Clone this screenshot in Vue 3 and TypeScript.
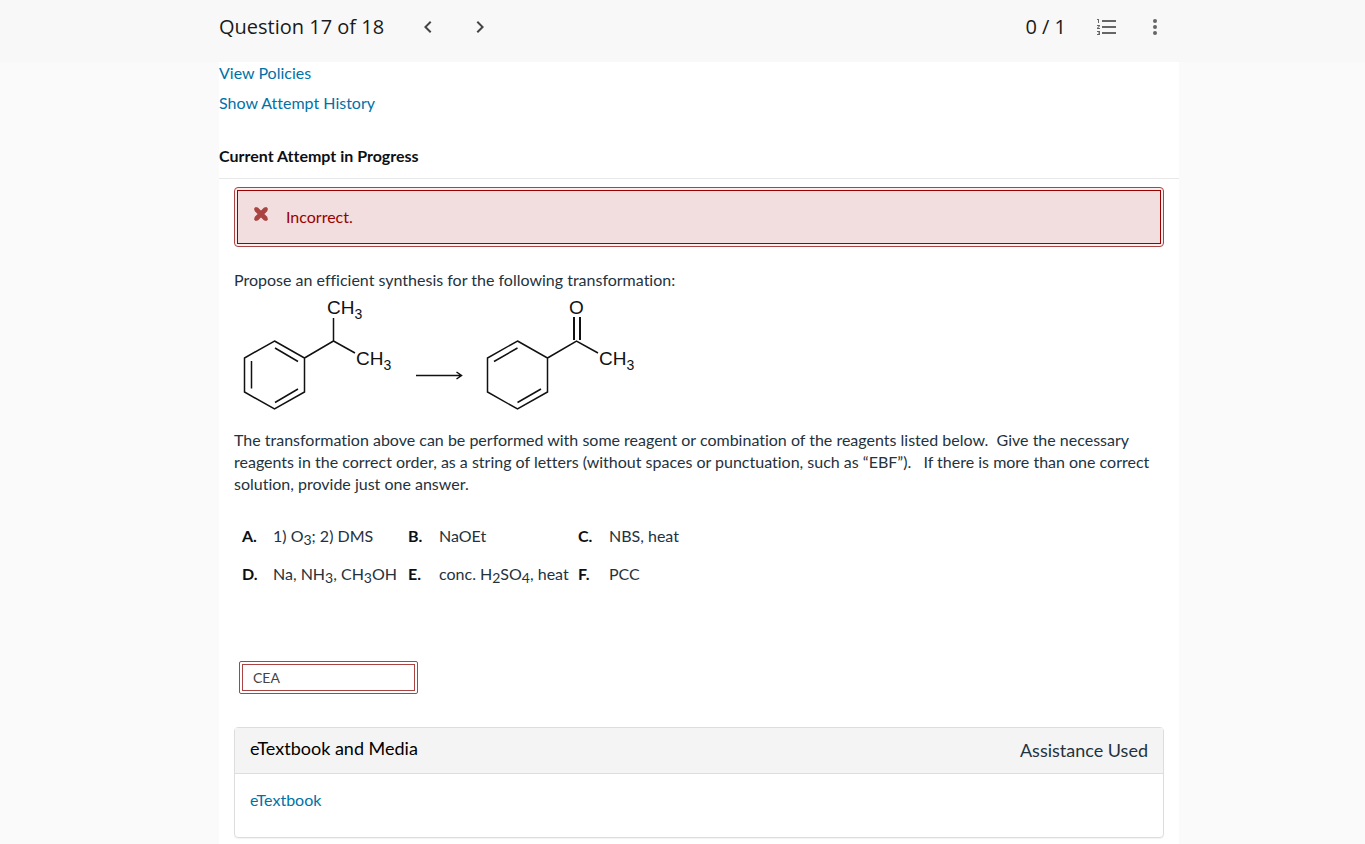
<script setup lang="ts">
import { ref } from 'vue'

interface Choice {
  letter: string
  parts: { text: string; sub?: boolean }[]
}

const answer = ref('CEA')

const rows: Choice[][] = [
  [
    { letter: 'A.', parts: [{ text: '1) O' }, { text: '3', sub: true }, { text: '; 2) DMS' }] },
    { letter: 'B.', parts: [{ text: 'NaOEt' }] },
    { letter: 'C.', parts: [{ text: 'NBS, heat' }] },
  ],
  [
    {
      letter: 'D.',
      parts: [
        { text: 'Na, NH' },
        { text: '3', sub: true },
        { text: ', CH' },
        { text: '3', sub: true },
        { text: 'OH' },
      ],
    },
    {
      letter: 'E.',
      parts: [
        { text: 'conc. H' },
        { text: '2', sub: true },
        { text: 'SO' },
        { text: '4', sub: true },
        { text: ', heat' },
      ],
    },
    { letter: 'F.', parts: [{ text: 'PCC' }] },
  ],
]
</script>

<template>
  <div class="page">
    <header class="topbar">
      <h1 class="title">Question 17 of 18</h1>
      <button class="icon-btn prev" type="button" aria-label="Previous question">
        <svg width="24" height="24" viewBox="0 0 24 24"><path d="M15.41 7.41 14 6l-6 6 6 6 1.41-1.41L10.83 12z" fill="#444" /></svg>
      </button>
      <button class="icon-btn next" type="button" aria-label="Next question">
        <svg width="24" height="24" viewBox="0 0 24 24"><path d="M10 6 8.59 7.41 13.17 12l-4.58 4.59L10 18l6-6z" fill="#444" /></svg>
      </button>
      <span class="score">0 / 1</span>
      <button class="icon-btn list" type="button" aria-label="Question list">
        <svg width="24" height="24" viewBox="0 0 24 24">
          <path d="M2 17h2v.5H3v1h1v.5H2v1h3v-4H2v1zm1-9h1V4H2v1h1v3zm-1 3h1.8L2 13.1v.9h3v-1H3.2L5 10.9V10H2v1zm5-6v2h14V5H7zm0 14h14v-2H7v2zm0-6h14v-2H7v2z" fill="#666" />
        </svg>
      </button>
      <button class="icon-btn" type="button" aria-label="More options">
        <svg width="24" height="24" viewBox="0 0 24 24" fill="#666">
          <circle cx="12" cy="6" r="2" /><circle cx="12" cy="12" r="2" /><circle cx="12" cy="18" r="2" />
        </svg>
      </button>
    </header>

    <main class="sheet">
      <nav class="links">
        <a href="#policies">View Policies</a>
        <a href="#history">Show Attempt History</a>
      </nav>
      <h2 class="attempt">Current Attempt in Progress</h2>

      <div class="body">
        <div class="alert" role="alert">
          <div class="alert-inner">
            <svg class="cross" width="16" height="16" viewBox="0 0 16 16">
              <path d="M3 3 13 13M13 3 3 13" stroke="#a94442" stroke-width="4.600" />
              <path d="M3 3 13 13M13 3 3 13" stroke="#a94442" stroke-width="3.600" stroke-linecap="round" />
            </svg>
            <span>Incorrect.</span>
          </div>
        </div>

        <p class="prompt">Propose an efficient synthesis for the following transformation:</p>

        <svg class="scheme" width="410" height="130" viewBox="0 1 410 130" role="img" aria-label="Reaction scheme">
          <g fill="none" stroke="#111" stroke-width="1.5">
            <path d="M40.500 51 70.500 68V102L40.500 119 10.500 102V68ZM41 58 64 71.500M17.500 71V98.500M41 112.500 64 99M70.500 68 99.500 51V28M99.500 51 121 63" />
            <path d="M182 85.500H227M222.500 82 227.500 85.500 222.500 89" />
            <path d="M283.500 51 313.500 68V102L283.500 119 253.500 102V68ZM283.500 58 260 71.500M283.500 112.500 307 99M313.500 68 342.500 51 364 63" />
            <path d="M340 50V27M346 50V27" stroke-width="2" />
          </g>
          <g class="atoms" fill="#111">
            <text x="93" y="24">CH<tspan class="atom-sub" dy="5">3</tspan></text>
            <text x="122" y="75">CH<tspan class="atom-sub" dy="5">3</tspan></text>
            <text x="335" y="24">O</text>
            <text x="365" y="75">CH<tspan class="atom-sub" dy="5">3</tspan></text>
          </g>
        </svg>

        <p class="instructions">
          The transformation above can be performed with some reagent or combination of the reagents listed below.&nbsp; Give the necessary reagents in the correct order, as a string of letters (without spaces or punctuation, such as “EBF”).&nbsp;&nbsp; If there is more than one correct solution, provide just one answer.
        </p>

        <table class="choices">
          <colgroup>
            <col class="col-letter" />
            <col class="col-reagent" />
            <col class="col-letter" />
            <col class="col-reagent-wide" />
            <col class="col-letter" />
            <col class="col-reagent" />
          </colgroup>
          <tbody>
            <tr v-for="(row, i) in rows" :key="i">
              <template v-for="c in row" :key="c.letter">
                <th scope="row">{{ c.letter }}</th>
                <td><template v-for="(p, j) in c.parts" :key="j"><sub v-if="p.sub">{{ p.text }}</sub><template v-else>{{ p.text }}</template></template></td>
              </template>
            </tr>
          </tbody>
        </table>

        <div class="answer">
          <input v-model="answer" type="text" aria-label="Answer" />
        </div>

        <section class="media">
          <div class="media-head">
            <h3>eTextbook and Media</h3>
            <span>Assistance Used</span>
          </div>
          <div class="media-body">
            <a href="#etextbook">eTextbook</a>
          </div>
        </section>
      </div>
    </main>
  </div>
</template>

<style>
body {
  margin: 0;
  background: #fafafa;
}
</style>

<style scoped>
.page {
  display: flex;
  flex-direction: column;
  min-height: 100vh;
  font-family: Lato, "Liberation Sans", sans-serif;
  font-size: 16px;
  font-variant-ligatures: none;
  line-height: 22px;
  color: #24323d;
}
h1, h2, h3, p {
  margin: 0;
}
a {
  color: #0071a6;
  text-decoration: none;
}
.topbar {
  display: flex;
  align-items: center;
  box-sizing: border-box;
  height: 62px;
  padding: 0 198px 8px 219px;
  background: #f8f8f8;
  font-family: "Open Sans", sans-serif;
  font-size: 20px;
  color: #1a1a1a;
}
.title {
  font-size: 20px;
  font-weight: 400;
}
.icon-btn {
  display: flex;
  padding: 0;
  border: 0;
  background: none;
  cursor: pointer;
}
.prev {
  margin-left: 32px;
}
.next {
  margin-left: 28px;
}
.score {
  margin-left: auto;
}
.list {
  margin: 0 24px 0 29px;
}
.sheet {
  flex: 1;
  margin: 0 186px 0 219px;
  background: #fff;
}
.links {
  display: flex;
  flex-direction: column;
  align-items: flex-start;
  gap: 8px;
}
.attempt {
  padding: 31px 0 11px;
  border-bottom: 1px solid #e8e8e8;
  font-size: 16px;
  font-weight: 700;
  color: #0c1015;
}
.body {
  padding: 8px 15px 5px;
}
.alert {
  padding: 2px;
  border: 1px solid #a94442;
  border-radius: 4px;
  background: #f9eeee;
}
.alert-inner {
  display: flex;
  align-items: center;
  gap: 17px;
  padding: 15px;
  border: 1px solid #900;
  background: #f2dede;
  color: #900;
}
.cross {
  margin-bottom: 6px;
}
.prompt {
  margin-top: 22px;
}
.scheme {
  display: block;
}
.atoms {
  font-family: "Liberation Sans", Arial, sans-serif;
  font-size: 19px;
}
.atom-sub {
  font-size: 14px;
}
.instructions {
  margin-top: 8px;
}
.choices {
  width: 464px;
  margin-top: 22px;
  border-collapse: collapse;
  table-layout: fixed;
}
.col-letter {
  width: 31px;
}
.col-reagent {
  width: 135px;
}
.col-reagent-wide {
  width: 139px;
}
.choices th,
.choices td {
  height: 22px;
  padding: 8px 0 8px 8px;
  text-align: left;
  white-space: nowrap;
}
.choices th {
  font-weight: 700;
  color: #0c1015;
}
.choices sub {
  position: relative;
  bottom: -3px;
  font-size: 14px;
  line-height: 0;
  vertical-align: baseline;
}
.answer {
  margin: 68px 0 33px 5px;
}
.answer input {
  display: block;
  box-sizing: border-box;
  width: 179px;
  height: 33px;
  padding: 0 10px;
  border: 4px double #a94442;
  border-radius: 2px;
  background: #fff;
  font: 14px/20px Lato, "Liberation Sans", sans-serif;
  color: #444;
}
.media {
  border: 1px solid #ddd;
  border-radius: 4px;
  box-shadow: 0 1px 1px rgba(0, 0, 0, 0.05);
}
.media-head {
  display: flex;
  align-items: flex-start;
  justify-content: space-between;
  padding: 9px 15px;
  border-bottom: 1px solid #ddd;
  background: #f4f4f4;
  font-size: 18px;
  line-height: 27px;
}
.media-head h3 {
  font-size: 18px;
  font-weight: 400;
  line-height: 22px;
  color: #000;
}
.media-body {
  padding: 15px 15px 26px;
}
</style>
